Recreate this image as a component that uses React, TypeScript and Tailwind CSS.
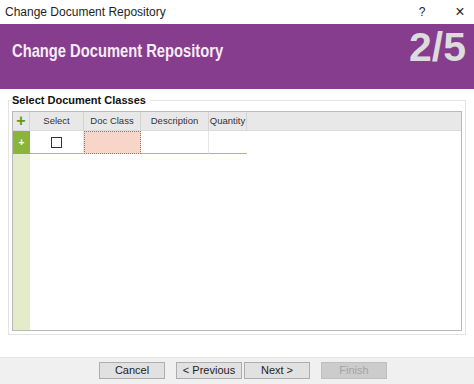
export default function App() {
  const cols = [
    { label: 'Select', w: 'w-[54px]' },
    { label: 'Doc Class', w: 'w-[57px]' },
    { label: 'Description', w: 'w-[68px]' },
    { label: 'Quantity', w: 'w-[38px]' },
  ];

  return (
    <div className="w-[474px] h-[384px] bg-white flex flex-col overflow-hidden font-['Liberation_Sans',Arial,sans-serif] text-[#1e1e1e]">
      {/* window title bar */}
      <div className="h-[24px] flex items-center pl-[5px] text-[12px] shrink-0">
        <span className="flex-1">Change Document Repository</span>
        <span className="w-[16px] text-center text-[12px] mr-[22px]">?</span>
        <span className="w-[16px] text-center text-[16px] font-light mr-[6px]">×</span>
      </div>

      {/* wizard banner */}
      <div className="h-[65px] bg-[#863d8d] flex justify-between shrink-0 pl-[12px] pr-[8px]">
        <h1 className="mt-[16px] h-[22px] leading-[22px] text-[#f6ecf6] font-bold text-[19px] origin-left scale-x-[0.775] whitespace-nowrap">
          Change Document Repository
        </h1>
        <span className="text-[#dcdcdc] font-bold text-[41px] leading-none pt-[3px]">2/5</span>
      </div>

      {/* content */}
      <div className="flex-1 pt-[4px] px-[8px] pb-[22px] flex flex-col">
        <fieldset className="flex-1 border border-[#e3e3e3] px-[3px] pb-[3px] pt-0 flex flex-col min-h-0">
          <legend className="text-[11px] font-bold pr-[4px] leading-[14px] text-[#111]">
            Select Document Classes
          </legend>
          <div className="flex-1 mt-[4px] border border-[#b9b9b9] flex flex-col bg-white">
            {/* header row */}
            <div className="h-[19px] bg-[#e8e8e8] flex text-[9.5px] text-[#333] border-b border-[#dadada] shrink-0">
              <div className="w-[17px] flex items-center justify-center text-[#5f9a1d] font-bold text-[16px] leading-none border-r border-[#d4d4d4]">
                +
              </div>
              {cols.map((c) => (
                <div key={c.label} className={`${c.w} flex items-center justify-center border-r border-[#d4d4d4] whitespace-nowrap`}>
                  {c.label}
                </div>
              ))}
            </div>
            {/* data row */}
            <div className="h-[23px] flex shrink-0">
              <div className="w-[17px] bg-[#8ab53a] flex items-center justify-center text-white text-[10px] font-bold">
                +
              </div>
              <div className="w-[54px] flex items-center justify-center border-b border-r border-[#b3b38a] border-r-[#e6e6e6]">
                <div className="w-[11px] h-[11px] border border-[#333] bg-white" />
              </div>
              <div className="w-[57px] bg-[#f7d5c9] border border-dotted border-[#8a7b70]" />
              <div className="w-[68px] border-b border-r border-[#b3b38a] border-r-[#e6e6e6]" />
              <div className="w-[38px] border-b border-[#b3b38a]" />
            </div>
            {/* filler */}
            <div className="flex-1 flex">
              <div className="w-[17px] bg-[#e3ecc8]" />
            </div>
          </div>
        </fieldset>
      </div>

      {/* button bar */}
      <div className="h-[27px] bg-[#f0f0f0] border-t border-[#e2e2e2] flex items-start pt-[4px] pl-[99px] shrink-0 text-[11px]">
        <button className="w-[66px] h-[17px] bg-[#e1e1e1] border border-[#adadad] leading-none">Cancel</button>
        <button className="ml-[11px] w-[66px] h-[17px] bg-[#e1e1e1] border border-[#adadad] leading-none">&lt; Previous</button>
        <button className="ml-[2px] w-[66px] h-[17px] bg-[#e1e1e1] border border-[#adadad] leading-none">Next &gt;</button>
        <button className="ml-[11px] w-[66px] h-[17px] bg-[#cccccc] border border-[#bfbfbf] text-[#a3a3a3] leading-none">Finish</button>
      </div>
    </div>
  );
}
